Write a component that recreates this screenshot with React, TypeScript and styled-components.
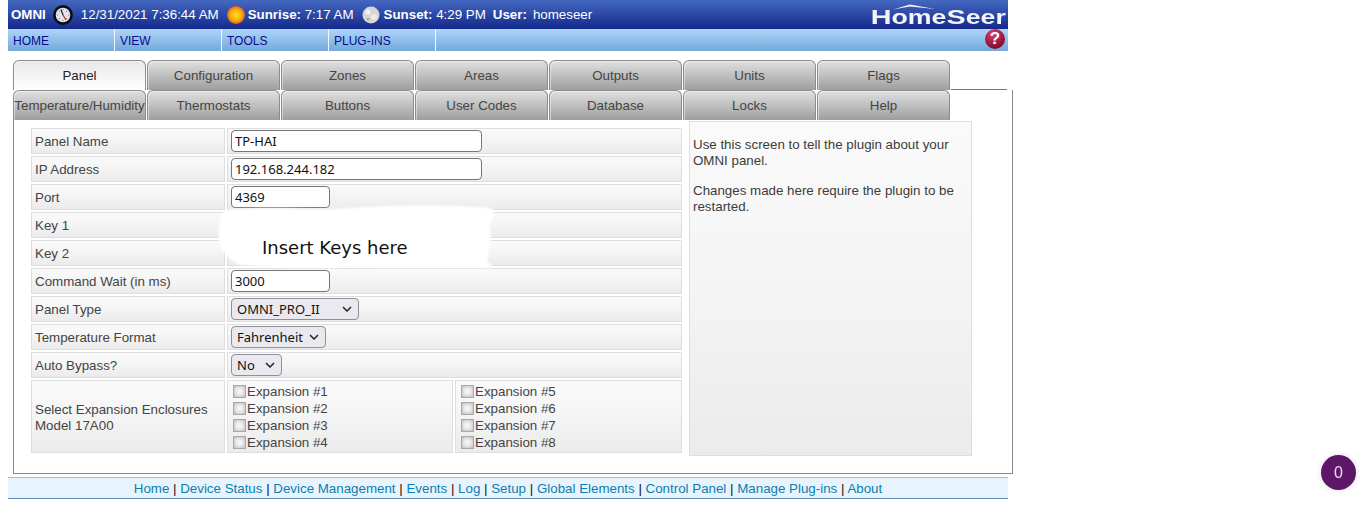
import React from "react";
import styled, { createGlobalStyle } from "styled-components";

const GlobalStyle = createGlobalStyle`
	html, body {
		margin: 0;
		padding: 0;
		background: #fff;
		font-family: "Liberation Sans", Arial, sans-serif;
		font-size: 13.33px;
	}
`;

const Page = styled.div`
	padding-left: 8px;
	width: 1010px;
`;

const TopBar = styled.div`
	width: 1000px;
	height: 29px;
	box-sizing: border-box;
	padding: 0 5px 0 3px;
	display: flex;
	align-items: center;
	background: linear-gradient(#4468c0, #13298c);
	color: #fff;
	font-size: 13.33px;
	white-space: nowrap;
`;

const Brand = styled.b`
	margin-right: 7px;
`;

const StatusText = styled.span<{ $gap?: number }>`
	margin-left: ${({ $gap }) => $gap ?? 0}px;
`;

const IconSlot = styled.svg<{ $left: number }>`
	margin-left: ${({ $left }) => $left}px;
	flex: none;
`;

const Logo = styled.div`
	position: relative;
	margin-left: auto;
	width: 130px;
	height: 25px;
	margin-bottom: 1px;
	display: flex;
	align-items: flex-end;
	justify-content: center;
	font-weight: bold;
	line-height: 20px;
	color: #f4f4f8;
`;

const LogoWord = styled.span`
	display: inline-block;
	font-size: 19.5px;
	transform: scaleX(1.37);
	transform-origin: center;
`;

const LogoCap = styled.span`
	font-size: 21px;
`;

const LogoRoof = styled.svg`
	position: absolute;
	left: 19px;
	top: 2px;
`;

const NavBar = styled.div`
	width: 1000px;
	height: 22px;
	display: flex;
	background: linear-gradient(#aed6fa, #74a8da);
	position: relative;
`;

const NavItem = styled.a`
	width: 107px;
	box-sizing: border-box;
	padding: 5px 0 0 5px;
	border-right: 1px solid #f2f7fc;
	color: #0a0a8c;
	font-size: 12px;
`;

const HelpBadge = styled.div`
	position: absolute;
	right: 3px;
	top: 0;
	width: 20px;
	height: 20px;
	border-radius: 50%;
	background: radial-gradient(circle at 40% 25%, #d8406a, #8c0c34 70%);
	color: #fff;
	font-weight: bold;
	font-size: 17px;
	line-height: 20px;
	text-align: center;
`;

const TabArea = styled.div`
	width: 1000px;
	margin: 9px 0 0 5px;
`;

const TabRow = styled.div`
	display: flex;
	height: 30px;
`;

const TabFiller = styled.div`
	width: 56px;
	height: 29px;
	border-bottom: 1px solid #777;
`;

const Tab = styled.div<{ $active?: boolean }>`
	width: 133px;
	height: 30px;
	margin-right: 1px;
	box-sizing: border-box;
	border: 1px solid #8c8c8c;
	border-bottom: none;
	border-radius: 6px 6px 0 0;
	box-shadow: inset 1px 1px 0 rgba(255, 255, 255, 0.45);
	background: ${({ $active }) =>
		$active ? "linear-gradient(#e8e8e8, #ffffff)" : "linear-gradient(#e0e0e0, #9e9e9e)"};
	color: ${({ $active }) => ($active ? "#222" : "#444")};
	text-align: center;
	line-height: 29px;
	white-space: nowrap;
	overflow: hidden;
`;

const PanelBox = styled.div`
	box-sizing: border-box;
	border-right: 1px solid #8a8a8a;
	border-bottom: 1px solid #8a8a8a;
`;

const PanelBody = styled.div`
	display: flex;
	gap: 7px;
	align-items: flex-start;
	border-left: 1px solid #8a8a8a;
	padding: 1px 0 17px 17px;
`;

const FormGrid = styled.div`
	position: relative;
	margin-top: 7px;
	display: grid;
	grid-template-columns: 194px 226px 227px;
	grid-template-rows: repeat(9, 26px) 73px;
	gap: 2px;
`;

const Cell = styled.div<{ $span?: number }>`
	grid-column: span ${({ $span }) => $span ?? 1};
	box-sizing: border-box;
	border: 1px solid #dedede;
	background: linear-gradient(#fafafa 0%, #f5f5f5 45%, #ebebeb 100%);
	color: #444;
	display: flex;
	align-items: center;
	min-width: 0;
`;

const LabelCell = styled(Cell)`
	padding: 2px 0 0 3px;
	line-height: 16px;
`;

const FieldCell = styled(Cell)`
	padding-left: 3px;
`;

const ExpansionCell = styled(Cell)`
	display: block;
	padding: 2px 0 0 5px;
`;

const TextInput = styled.input<{ $width: number }>`
	width: ${({ $width }) => $width}px;
	height: 22px;
	box-sizing: border-box;
	border: 1px solid #767676;
	border-radius: 4px;
	background: #fff;
	padding: 1px 3px;
	color: #111;
	font-family: "Noto Sans", sans-serif;
	font-size: 13px;
`;

const chevron =
	"data:image/svg+xml;utf8,<svg xmlns='http://www.w3.org/2000/svg' width='10' height='6' viewBox='0 0 10 6'><path d='M1 1l4 4 4-4' fill='none' stroke='%23222' stroke-width='1.5'/></svg>";

const Dropdown = styled.select<{ $width: number }>`
	appearance: none;
	width: ${({ $width }) => $width}px;
	height: 22px;
	box-sizing: border-box;
	border: 1px solid #8f8f9d;
	border-radius: 4px;
	background: #e9e9ef url("${chevron}") no-repeat right 6px center;
	color: #111;
	padding: 0 0 0 5px;
	font-family: "Noto Sans", sans-serif;
	font-size: 13px;
`;

const CheckRow = styled.label`
	display: flex;
	align-items: center;
	height: 17px;
	color: #444;
`;

const CheckBox = styled.input`
	appearance: none;
	width: 13px;
	height: 13px;
	margin: 0 1px 0 0;
	border: 1px solid #a8a8a8;
	background: #f4f4f4;
	box-shadow: inset 0 0 4px #a8a8a8;
`;

const KeysOverlay = styled.svg`
	position: absolute;
	left: 186px;
	top: 77px;
	filter: blur(0.8px);
`;

const KeysNote = styled.div`
	position: absolute;
	left: 231px;
	top: 110px;
	font-family: "DejaVu Sans", sans-serif;
	font-size: 18px;
	line-height: 20px;
	color: #111;
`;

const HelpPanel = styled.div`
	width: 283px;
	height: 335px;
	box-sizing: border-box;
	border: 1px solid #dedede;
	background: linear-gradient(#fafafa 0%, #f4f4f4 50%, #ebebeb 100%);
	padding: 15px 3px 0 3px;
	color: #3c3c3c;
	line-height: 16px;

	p {
		margin: 0 0 14px;
	}
`;

const Footer = styled.div`
	width: 1000px;
	height: 22px;
	margin-top: 3px;
	box-sizing: border-box;
	border-top: 1px solid #8cc4ea;
	border-bottom: 1px solid #5a8cc0;
	background: #e8f4fd;
	color: #111;
	text-align: center;
	line-height: 21px;
`;

const FooterLink = styled.a`
	color: #0b7fb0;
`;

const CountBubble = styled.div`
	position: fixed;
	left: 1321px;
	top: 455px;
	width: 35px;
	height: 35px;
	border-radius: 50%;
	background: #5e1768;
	color: #e8dcea;
	font-size: 16px;
	line-height: 35px;
	text-align: center;
	box-shadow: 0 0 6px rgba(0, 0, 0, 0.12);
`;

const tabsTop = ["Panel", "Configuration", "Zones", "Areas", "Outputs", "Units", "Flags"];
const tabsBottom = ["Temperature/Humidity", "Thermostats", "Buttons", "User Codes", "Database", "Locks", "Help"];
const footerLinks = ["Home", "Device Status", "Device Management", "Events", "Log", "Setup", "Global Elements", "Control Panel", "Manage Plug-ins", "About"];

const App: React.FC = () => {
	return (
		<Page>
			<GlobalStyle />
			<TopBar>
				<Brand>OMNI</Brand>
				<IconSlot $left={0} width="20" height="20" viewBox="0 0 20 20">
					<circle cx="10" cy="10" r="8.6" fill="#e4e4ea" stroke="#0c0c14" strokeWidth="2.6" />
					<path d="M10 10 L8 4.5" stroke="#222" strokeWidth="1.2" />
					<path d="M10 10 L13 15" stroke="#c22" strokeWidth="1.2" />
					<path d="M10 4v1M10 15v1M4 10h1M15 10h1M6 6l1 1M14 6l-1 1M6 14l1-1M14 14l-1-1" stroke="#777" strokeWidth="1" />
				</IconSlot>
				<StatusText $gap={8}>12/31/2021 7:36:44 AM</StatusText>
				<IconSlot $left={8} width="18" height="18" viewBox="0 0 18 18">
					<defs>
						<radialGradient id="sun">
							<stop offset="0%" stopColor="#ffe020" />
							<stop offset="60%" stopColor="#fdb010" />
							<stop offset="100%" stopColor="#e8601c" />
						</radialGradient>
					</defs>
					<circle cx="9" cy="9" r="9" fill="url(#sun)" />
				</IconSlot>
				<StatusText $gap={3}><b>Sunrise:</b> 7:17 AM</StatusText>
				<IconSlot $left={8} width="18" height="18" viewBox="0 0 18 18">
					<circle cx="9" cy="9" r="8.5" fill="#d6d6d6" />
					<circle cx="6" cy="6" r="2.5" fill="#f2f2f2" />
					<circle cx="12" cy="11" r="3" fill="#ececec" />
					<circle cx="6" cy="13" r="1.5" fill="#a8a8a8" />
				</IconSlot>
				<StatusText $gap={4}><b>Sunset:</b> 4:29 PM</StatusText>
				<StatusText $gap={7}><b>User:</b></StatusText>
				<StatusText $gap={6}>homeseer</StatusText>
				<Logo>
					<LogoRoof width="44" height="6" viewBox="0 0 44 6">
						<path d="M1 5.5 L18 0.5 L43 5 L18 2.5 Z" fill="#f4f4f8" />
					</LogoRoof>
					<LogoWord><LogoCap>H</LogoCap>ome<LogoCap>S</LogoCap>eer</LogoWord>
				</Logo>
			</TopBar>
			<NavBar>
				<NavItem>HOME</NavItem>
				<NavItem>VIEW</NavItem>
				<NavItem>TOOLS</NavItem>
				<NavItem>PLUG-INS</NavItem>
				<HelpBadge>?</HelpBadge>
			</NavBar>

			<TabArea>
				<TabRow>
					{tabsTop.map((t, i) => (
						<Tab key={t} $active={i === 0}>{t}</Tab>
					))}
					<TabFiller />
				</TabRow>
				<PanelBox>
					<TabRow>
						{tabsBottom.map((t) => (
							<Tab key={t}>{t}</Tab>
						))}
					</TabRow>
					<PanelBody>
						<FormGrid>
							<LabelCell>Panel Name</LabelCell>
							<FieldCell $span={2}><TextInput $width={251} defaultValue="TP-HAI" /></FieldCell>
							<LabelCell>IP Address</LabelCell>
							<FieldCell $span={2}><TextInput $width={251} defaultValue="192.168.244.182" /></FieldCell>
							<LabelCell>Port</LabelCell>
							<FieldCell $span={2}><TextInput $width={99} defaultValue="4369" /></FieldCell>
							<LabelCell>Key 1</LabelCell>
							<FieldCell $span={2} />
							<LabelCell>Key 2</LabelCell>
							<FieldCell $span={2} />
							<LabelCell>Command Wait (in ms)</LabelCell>
							<FieldCell $span={2}><TextInput $width={99} defaultValue="3000" /></FieldCell>
							<LabelCell>Panel Type</LabelCell>
							<FieldCell $span={2}>
								<Dropdown $width={128} defaultValue="OMNI_PRO_II"><option>OMNI_PRO_II</option></Dropdown>
							</FieldCell>
							<LabelCell>Temperature Format</LabelCell>
							<FieldCell $span={2}>
								<Dropdown $width={95} defaultValue="Fahrenheit"><option>Fahrenheit</option></Dropdown>
							</FieldCell>
							<LabelCell>Auto Bypass?</LabelCell>
							<FieldCell $span={2}>
								<Dropdown $width={51} defaultValue="No"><option>No</option></Dropdown>
							</FieldCell>
							<LabelCell>Select Expansion Enclosures<br />Model 17A00</LabelCell>
							<ExpansionCell>
								{[1, 2, 3, 4].map((n) => (
									<CheckRow key={n}><CheckBox type="checkbox" />Expansion #{n}</CheckRow>
								))}
							</ExpansionCell>
							<ExpansionCell>
								{[5, 6, 7, 8].map((n) => (
									<CheckRow key={n}><CheckBox type="checkbox" />Expansion #{n}</CheckRow>
								))}
							</ExpansionCell>
							<KeysOverlay width="282" height="66" viewBox="0 0 282 66">
								<path d="M8 5 C30 3 60 3 90 4 C110 5 125 3 150 2 C190 0 240 0 274 3 C280 10 276 14 272 22 C276 32 272 44 270 56 C274 60 278 62 274 63 C220 62 180 63 130 62 C90 64 50 62 24 60 C8 54 0 40 2 26 C2 16 4 10 8 5 Z" fill="#fff" />
							</KeysOverlay>
							<KeysNote>Insert Keys here</KeysNote>
						</FormGrid>
						<HelpPanel>
							<p>Use this screen to tell the plugin about your OMNI panel.</p>
							<p>Changes made here require the plugin to be restarted.</p>
						</HelpPanel>
					</PanelBody>
				</PanelBox>
			</TabArea>

			<Footer>
				{footerLinks.map((l, i) => (
					<React.Fragment key={l}>
						{i > 0 && " | "}
						<FooterLink>{l}</FooterLink>
					</React.Fragment>
				))}
			</Footer>
			<CountBubble>0</CountBubble>
		</Page>
	);
};

export default App;
